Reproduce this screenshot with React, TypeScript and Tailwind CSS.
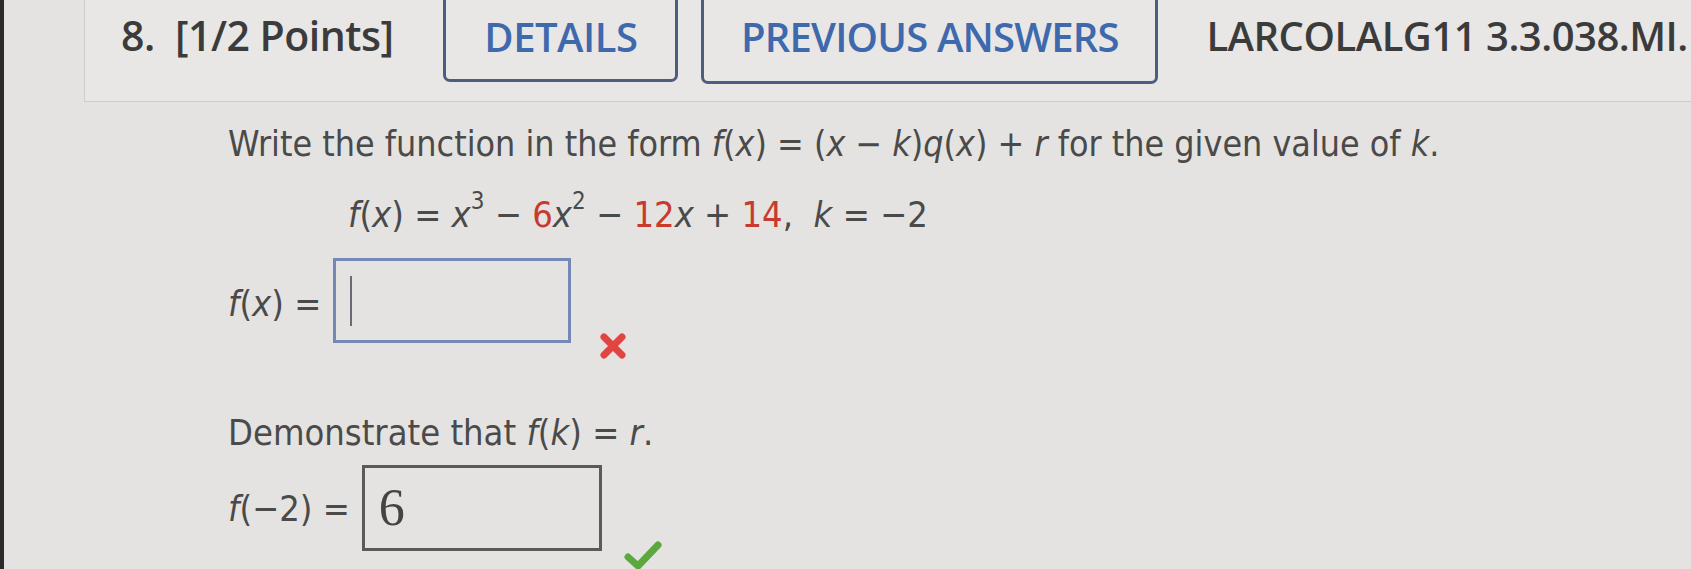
import React from "react";

const body = { fontFamily: '"DejaVu Sans Condensed", "DejaVu Sans", Verdana, sans-serif' };
const head = { fontFamily: '"Open Sans", "Noto Sans", sans-serif' };

function I({ children }: { children: React.ReactNode }) {
  return <span className="italic">{children}</span>;
}
function Sup({ children }: { children: React.ReactNode }) {
  return <sup className="relative top-[-5px] text-[24px] leading-none align-super">{children}</sup>;
}

export default function App() {
  return (
    <div className="w-[1691px] h-[569px] overflow-hidden bg-[#e4e3e1] flex">
      <div className="w-[4px] shrink-0 bg-[#2a2a2a]" />
      <div className="flex-1 min-w-0 flex flex-col">
        <div className="shrink-0 ml-[80px] h-[102px] bg-[#e8e7e5] border-l border-b border-[#cdccca] flex items-start pl-[36px]" style={head}>
          <div className="shrink-0 h-[72px] flex items-center whitespace-nowrap text-[41px] font-semibold text-[#3b3b3b] tracking-[-0.5px]">
            8.&nbsp; [1/2 Points]
          </div>
          <div className="shrink-0 ml-[50px] w-[235px] h-[82px] border-x-[3px] border-b-[3px] border-[#4d5d80] rounded-b-[7px] flex items-center justify-center pb-[6px] text-[40px] font-semibold text-[#3f69ad] tracking-[-0.5px]">
            DETAILS
          </div>
          <div className="shrink-0 ml-[23px] w-[457px] h-[84px] border-x-[3px] border-b-[3px] border-[#4d5d80] rounded-b-[7px] flex items-center justify-center pb-[8px] whitespace-nowrap text-[40px] font-semibold text-[#3f69ad] tracking-[-0.8px]">
            PREVIOUS ANSWERS
          </div>
          <div className="shrink-0 ml-[48px] h-[72px] flex items-center text-[40px] font-semibold text-[#3b3b3b] whitespace-nowrap tracking-[-0.5px]">
            LARCOLALG11 3.3.038.MI.
          </div>
        </div>
        <div className="pl-[224px] pt-[20px] text-[#4a4a4a]" style={body}>
          <div className="text-[35.5px] leading-[44px] whitespace-nowrap">
            Write the function in the form <I>f</I>(<I>x</I>) = (<I>x</I> − <I>k</I>)<I>q</I>(<I>x</I>) + <I>r</I> for the given value of <I>k</I>.
          </div>
          <div className="mt-[27px] ml-[120px] text-[36px] leading-[44px] whitespace-nowrap">
            <I>f</I>(<I>x</I>) = <I>x</I><Sup>3</Sup> − <span className="text-[#c8392e]">6</span><I>x</I><Sup>2</Sup> − <span className="text-[#c8392e]">12</span><I>x</I> + <span className="text-[#c8392e]">14</span>,&nbsp; <I>k</I> = −2
          </div>
          <div className="mt-[21px] flex items-start">
            <div className="h-[92px] flex items-center text-[36px] whitespace-nowrap">
              <I>f</I>(<I>x</I>) =
            </div>
            <div className="ml-[12px] w-[238px] h-[85px] border-[3px] border-[#7587b5] flex items-center pl-[14px]">
              <div className="w-[2px] h-[50px] bg-[#6a6a72]" />
            </div>
            <svg className="ml-[28px] mt-[74px]" width="28" height="28" viewBox="0 0 28 28">
              <path d="M5 5 L23 23 M23 5 L5 23" stroke="#e0453f" strokeWidth="7" strokeLinecap="round" />
            </svg>
          </div>
          <div className="mt-[51px] text-[36px] leading-[44px] whitespace-nowrap">
            Demonstrate that <I>f</I>(<I>k</I>) = <I>r</I>.
          </div>
          <div className="mt-[10px] flex items-start">
            <div className="h-[88px] flex items-center text-[36px] whitespace-nowrap">
              <I>f</I>(−2) =
            </div>
            <div className="ml-[12px] w-[240px] h-[86px] border-[3px] border-[#5a5a5a] flex items-center pl-[14px] text-[52px] text-[#444]" style={{ fontFamily: '"Liberation Serif", serif' }}>
              6
            </div>
            <svg className="ml-[22px] mt-[74px]" width="38" height="32" viewBox="0 0 38 32">
              <path d="M4 18 L14 27 L34 6" stroke="#5aa83e" strokeWidth="7" fill="none" strokeLinecap="round" strokeLinejoin="round" />
            </svg>
          </div>
        </div>
      </div>
    </div>
  );
}
